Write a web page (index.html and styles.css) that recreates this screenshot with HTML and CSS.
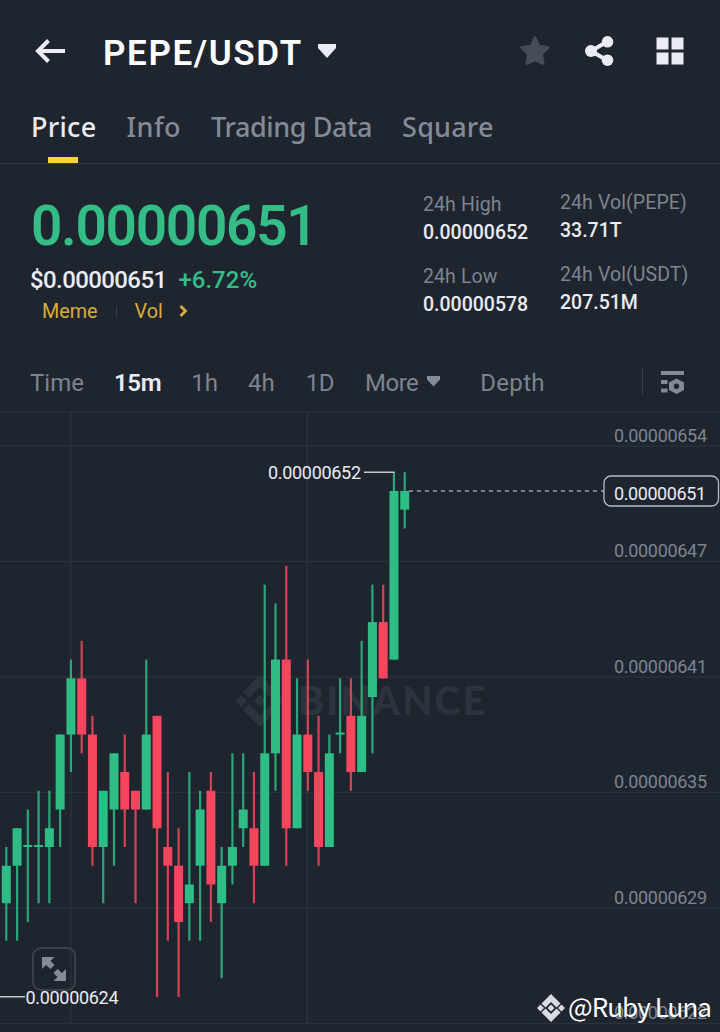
FILE: index.html
```html
<!DOCTYPE html>
<html lang="en">
<head>
  <meta charset="utf-8">
  <meta name="viewport" content="width=device-width, initial-scale=1">
  <title>PEPE/USDT</title>
  <link rel="stylesheet" href="styles.css">
</head>
<body>
  <header class="topbar">
    <svg class="back" width="32" height="26" viewBox="0 0 32 26" fill="none" stroke="#eaecf4" stroke-width="4">
      <path d="M31 13H4M14.5 2.5L4 13l10.500 10.500"/>
    </svg>
    <h1 class="pair">PEPE/USDT</h1>
    <svg class="caret" width="18" height="15" viewBox="0 0 18 15"><path d="M0 0h18v4L9 14 0 4z" fill="#eaecf4"/></svg>
    <div class="actions">
      <svg width="32" height="32" viewBox="0 0 32 32"><path d="M16 2.500l4 8.500 9.500 1.400-6.800 6.700 1.600 9.500L16 25l-8.300 3.600 1.600-9.500-6.800-6.700L12 11z" fill="#474d57" stroke="#474d57" stroke-width="2.500" stroke-linejoin="round"/></svg>
      <svg width="32" height="32" viewBox="0 0 32 32" fill="#eaecf4"><path d="M23.500 6.500L7 16l16.500 9.500" fill="none" stroke="#eaecf4" stroke-width="4"/><circle cx="7" cy="16" r="6"/><circle cx="23.500" cy="6.800" r="5.800"/><circle cx="23.500" cy="25.200" r="5.800"/></svg>
      <svg width="28" height="28" viewBox="0 0 28 28"><path d="M.5.5h12v12H.5zM15.500.5h12v12h-12zM.5 15.500h12v12H.5zM15.500 15.500h12v12h-12z" fill="#eaecf4"/></svg>
    </div>
  </header>

  <nav class="tabs">
    <a class="tab price-tab active">Price</a>
    <a class="tab info-tab">Info</a>
    <a class="tab data-tab">Trading Data</a>
    <a class="tab square-tab">Square</a>
  </nav>

  <section class="ticker">
    <div class="quote">
      <div class="last">0.00000651</div>
      <div class="fiat"><span class="usd">$0.00000651</span><span class="change">+6.72%</span></div>
      <div class="tags">
        <span class="meme">Meme</span>
        <i class="tag-sep"></i>
        <span class="vol">Vol</span>
        <svg width="9" height="14" viewBox="0 0 9 14" fill="none" stroke="#d9ad3c" stroke-width="2.800"><path d="M1.500 2l5 5-5 5"/></svg>
      </div>
    </div>
    <dl class="stats">
      <dt>24h High</dt>
      <dd>0.00000652</dd>
      <dt>24h Low</dt>
      <dd>0.00000578</dd>
    </dl>
    <dl class="stats volumes">
      <dt>24h Vol(PEPE)</dt>
      <dd>33.71T</dd>
      <dt>24h Vol(USDT)</dt>
      <dd>207.51M</dd>
    </dl>
  </section>

  <nav class="intervals">
    <a class="time">Time</a>
    <a class="m15">15m</a>
    <a class="h1">1h</a>
    <a class="h4">4h</a>
    <a class="d1">1D</a>
    <a class="more">More</a>
    <svg class="more-caret" width="13" height="11" viewBox="0 0 13 11"><path d="M0 0h13v3.500L6.500 10.500 0 3.500z" fill="#848b96"/></svg>
    <a class="depth">Depth</a>
    <i class="bar"></i>
    <svg class="settings" width="25" height="25" viewBox="0 0 25 25" fill="#848b96">
      <path d="M1 1h23v4H1zM1 10h6.500v4H1zM1 18.500h6.500v4H1z"/>
      <path fill-rule="evenodd" d="M16.500 8.500l7.500 4v7.500l-7.500 4-7.500-4v-7.500zM16.500 13.500a2.700 2.700 0 1 0 0 5.400 2.700 2.700 0 0 0 0-5.400z"/>
    </svg>
  </nav>

  <main>
    <svg class="chart" width="720" height="621" viewBox="0 411 720 621">
      <g class="grid">
        <path d="M0 412h720M0 446h720M0 561.500h720M0 677h720M0 792.500h720M0 908h720M0 1023.500h720M71 412v611M307.500 412v611"/>
      </g>
      <g class="watermark">
        <path d="M260 675l17 17-6 6-11-11-11 11-6-6zM260 727l-17-17 6-6 11 11 11-11 6 6zM241 695l6 6-6 6-6-6zM260 695l6 6-6 6-6-6zM279 695l6 6-6 6-6-6z"/>
        <text x="298" y="715" textLength="187">BINANCE</text>
      </g>
      <g id="candles"></g>
      <g class="axis">
        <text x="614" y="442" textLength="93">0.00000654</text>
        <text x="614" y="557" textLength="93">0.00000647</text>
        <text x="614" y="673" textLength="93">0.00000641</text>
        <text x="614" y="788" textLength="93">0.00000635</text>
        <text x="614" y="904" textLength="93">0.00000629</text>
        <text x="614" y="1019" textLength="93">0.00000622</text>
      </g>
      <path class="pointer" d="M364 472.300h30.500M0 996.800h25"/>
      <path class="last-line" d="M409 491h195"/>
      <rect class="last-box" x="604" y="476" width="114.500" height="30" rx="7"/>
      <g class="marks">
        <text x="268" y="479" textLength="93">0.00000652</text>
        <text x="614" y="500" textLength="92">0.00000651</text>
        <text x="25.500" y="1004" textLength="93">0.00000624</text>
      </g>
      <rect class="expand-box" x="33" y="948" width="42" height="42" rx="8"/>
      <path class="expand" d="M42 957h12.500l-4 4 4 4-4 4-4.500-4-4 4zM66 981H53.500l4-4-4-4 4-4 4.500 4 4-4z"/>
      <g class="author">
        <path d="M551 994l9.500 9.500-4 4-5.500-5.500-5.500 5.500-4-4zM551 1022l-9.500-9.500 4-4 5.500 5.500 5.500-5.500 4 4zM540.500 1004.500l3.500 3.500-3.500 3.500-3.500-3.500zM551 1004.500l3.500 3.500-3.500 3.500-3.500-3.500zM561.500 1004.500l3.500 3.500-3.500 3.500-3.500-3.500z"/>
        <text x="568" y="1017" textLength="144">@Ruby Luna</text>
      </g>
    </svg>
  </main>

  <script>
    // open, high, low, close in units of 0.00000001
    const candles = [
      [629, 632, 627, 631], [631, 633, 627, 633], [632, 634, 628, 632], [632, 635, 629, 632],
      [632, 635, 629, 633], [634, 638, 632, 638], [638, 642, 636, 641], [641, 643, 637, 638],
      [638, 639, 631, 632], [632, 635, 629, 635], [634, 637, 631, 637], [636, 638, 632, 634],
      [635, 635, 629, 634], [634, 642, 634, 638], [639, 639, 624, 633], [632, 636, 627, 631],
      [631, 633, 624, 628], [629, 636, 627, 630], [631, 635, 627, 634], [635, 636, 628, 630],
      [629, 632, 625, 631], [631, 637, 630, 632], [633, 637, 632, 634], [633, 636, 629, 631],
      [631, 646, 631, 637], [637, 645, 635, 642], [642, 647, 631, 633], [633, 641, 633, 638],
      [638, 642, 635, 636], [636, 639, 631, 632], [632, 638, 632, 637], [638, 641, 637, 638],
      [639, 641, 635, 636], [636, 643, 636, 639], [640, 646, 637, 644], [644, 646, 641, 641],
      [642, 652, 642, 651], [650, 652, 649, 651]
    ];

    const y = p => 472.2 + (652 - p) * 18.74;

    function rect(x, top, w, h, cls) {
      return `<rect class="${cls}" x="${x.toFixed(2)}" y="${top.toFixed(2)}" width="${w}" height="${h.toFixed(2)}"/>`;
    }

    let out = '';
    candles.forEach(([open, high, low, close], i) => {
      const x = 6.3 + i * 10.768;
      const dir = close < open ? 'down' : 'up';
      const top = y(Math.max(open, close));
      out += rect(x - 1.1, y(high), 2.2, y(low) - y(high), dir + ' wick');
      if (open === close) {
        out += rect(x - 4.5, top - 2, 9, 2, dir);
      } else {
        out += rect(x - 4.5, top, 9, Math.abs(close - open) * 18.74, dir);
      }
    });
    document.getElementById('candles').innerHTML = out;
  </script>
</body>
</html>
```
FILE: styles.css
```css
* {
  box-sizing: border-box;
}
body {
  margin: 0;
  width: 720px;
  height: 1032px;
  overflow: hidden;
  background: #1f252f;
  color: #eaecf4;
  font-family: Roboto, "Liberation Sans", sans-serif;
}
svg {
  display: block;
  flex: none;
}
a, span {
  white-space: nowrap;
}

/* header */
.topbar {
  display: flex;
  align-items: center;
  height: 102px;
  padding: 0 36px 0 34px;
}
.pair {
  width: 200px;
  margin: 5px 0 0 37px;
  font-size: 35px;
  line-height: 40px;
  font-weight: 600;
  letter-spacing: 1.6px;
  color: #fff;
  white-space: nowrap;
}
.caret {
  margin-left: 15px;
}
.actions {
  display: flex;
  align-items: center;
  gap: 33px;
  margin-left: auto;
}
.actions svg:last-child {
  margin-left: 7px;
}

/* tabs */
.tabs {
  display: flex;
  gap: 30px;
  height: 62px;
  padding-left: 31px;
  border-bottom: 1px solid #353c48;
}
.tab {
  font-family: "Noto Sans", sans-serif;
  font-size: 27px;
  line-height: 50px;
  font-weight: 500;
  color: #848b96;
}
.price-tab {
  letter-spacing: 0.3px;
}
.info-tab {
  letter-spacing: 0.5px;
}
.data-tab {
  letter-spacing: -0.4px;
}
.square-tab {
  letter-spacing: 0.2px;
}
.tab.active {
  color: #eaecf4;
}
.active::after {
  content: "";
  display: block;
  width: 30px;
  height: 6px;
  margin: 5px 0 0 17px;
  background: #fcd535;
}

/* ticker */
.ticker {
  display: flex;
  height: 191px;
  padding: 27px 0 0 31px;
}
.quote {
  width: 392px;
  padding-top: 3px;
}
.last {
  font-size: 55px;
  line-height: 64px;
  font-weight: 600;
  letter-spacing: -1.3px;
  color: #35bd87;
}
.fiat {
  display: flex;
  gap: 12px;
  margin: 7px 0 0 -1px;
  font-size: 24px;
  line-height: 30px;
  font-weight: 500;
}
.usd {
  letter-spacing: -0.6px;
}
.change {
  color: #35bd87;
}
.tags {
  display: flex;
  align-items: center;
  height: 32px;
  padding-left: 11px;
  font-size: 19.8px;
  color: #d9ad3c;
}
.tag-sep {
  width: 1px;
  height: 10px;
  margin: 0 18px;
  background: #3a414c;
}
.tags svg {
  margin-left: 16px;
}
.stats {
  width: 137px;
  margin: 0;
  font-size: 19.5px;
  white-space: nowrap;
}
.stats dt {
  height: 28px;
  line-height: 28px;
  color: #7c8490;
  letter-spacing: 0.1px;
}
.stats dd {
  height: 44px;
  margin: 0;
  line-height: 28px;
  font-weight: 500;
}
.volumes {
  margin-top: -2px;
}

/* intervals */
.intervals {
  display: flex;
  align-items: center;
  height: 56px;
  padding: 0 0 4px 30px;
  font-size: 24px;
  color: #7c8490;
}
.intervals a {
  padding-top: 4px;
}
.m15 {
  margin-left: 30px;
  color: #eaecf4;
  font-weight: 600;
  letter-spacing: -0.3px;
}
.h1, .h4 {
  margin-left: 30px;
}
.d1 {
  margin-left: 31px;
  letter-spacing: -0.5px;
}
.more {
  margin-left: 31px;
  letter-spacing: -0.5px;
}
.more-caret {
  margin-left: 9px;
}
.depth {
  margin-left: 40px;
  letter-spacing: 0.3px;
}
.bar {
  width: 1px;
  height: 26px;
  margin-left: auto;
  background: #3a414c;
}
.settings {
  margin: 2px 35px 0 17px;
}

/* chart */
.chart {
  font-size: 18px;
}
.grid path {
  stroke: #2b313b;
  stroke-width: 1.500;
}
.watermark {
  fill: #2c333d;
  font-family: Lato, sans-serif;
  font-size: 39px;
  font-weight: 900;
}
.axis {
  fill: #7c8490;
}
.marks {
  fill: #eaecf4;
}
.up {
  fill: #2ebd85;
}
.down {
  fill: #f6465d;
}
.wick {
  opacity: .85;
}
.pointer {
  fill: none;
  stroke: #c5c9d1;
  stroke-width: 1.500;
}
.last-line {
  stroke: #9aa0aa;
  stroke-width: 1.500;
  stroke-dasharray: 4 4;
}
.last-box {
  fill: #1f252f;
  stroke: #b7bcc6;
  stroke-width: 1.300;
}
.expand-box {
  fill: none;
  stroke: #3a414c;
  stroke-width: 2;
}
.expand {
  fill: #848b96;
}
.author {
  fill: #fff;
  font-family: "Noto Sans CJK SC", sans-serif;
  font-size: 26px;
}
.author path {
  fill: #d9dbe0;
}
```
